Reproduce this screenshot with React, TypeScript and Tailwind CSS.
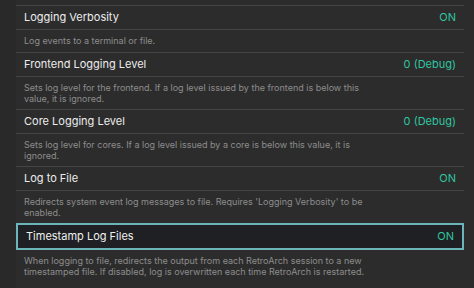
const items = [
  {
    title: 'Logging Verbosity',
    value: 'ON',
    desc: ['Log events to a terminal or file.'],
  },
  {
    title: 'Frontend Logging Level',
    value: '0 (Debug)',
    desc: [
      'Sets log level for the frontend. If a log level issued by the frontend is below this',
      'value, it is ignored.',
    ],
  },
  {
    title: 'Core Logging Level',
    value: '0 (Debug)',
    desc: [
      'Sets log level for cores. If a log level issued by a core is below this value, it is',
      'ignored.',
    ],
  },
  {
    title: 'Log to File',
    value: 'ON',
    desc: [
      "Redirects system event log messages to file. Requires 'Logging Verbosity' to be",
      'enabled.',
    ],
  },
  {
    title: 'Timestamp Log Files',
    value: 'ON',
    selected: true,
    desc: [
      'When logging to file, redirects the output from each RetroArch session to a new',
      'timestamped file. If disabled, log is overwritten each time RetroArch is restarted.',
    ],
  },
];

export default function App() {
  return (
    <div
      className="w-[474px] h-[288px] overflow-hidden bg-[#2c2c2c] flex"
      style={{ fontFamily: 'Inter, "Noto Sans", sans-serif' }}
    >
      <div className="w-4 shrink-0 bg-[#292929]" />
      <div className="w-[448px] pt-[5px]">
        {items.map((item) =>
          item.selected ? (
            <div key={item.title}>
              <div className="h-[27px] flex items-center justify-between px-2 border-2 border-[#6cb6bb] bg-[#1f2023]">
                <span className="text-[11px] text-[#f0f0f0]">{item.title}</span>
                <span className="text-[11px] text-[#2fc6a0]">{item.value}</span>
              </div>
              <div className="pt-[5px] pb-[5px] px-2 text-[9px] leading-[11px] text-[#8c8c8c]">
                {item.desc.map((d) => (
                  <div key={d}>{d}</div>
                ))}
              </div>
            </div>
          ) : (
            <div key={item.title}>
              <div className="h-[24px] flex items-center justify-between px-2 border-t border-[#444444]">
                <span className="text-[11px] text-[#ececec]">{item.title}</span>
                <span className="text-[11px] text-[#2fc6a0]">{item.value}</span>
              </div>
              <div
                className={
                  item.desc.length > 1
                    ? 'pt-[5px] pb-[5px] px-2 border-t border-[#444444] text-[9px] leading-[11px] text-[#8c8c8c]'
                    : 'pt-[5px] pb-[6px] px-2 border-t border-[#444444] text-[9px] leading-[11px] text-[#8c8c8c]'
                }
              >
                {item.desc.map((d) => (
                  <div key={d}>{d}</div>
                ))}
              </div>
            </div>
          )
        )}
      </div>
    </div>
  );
}
